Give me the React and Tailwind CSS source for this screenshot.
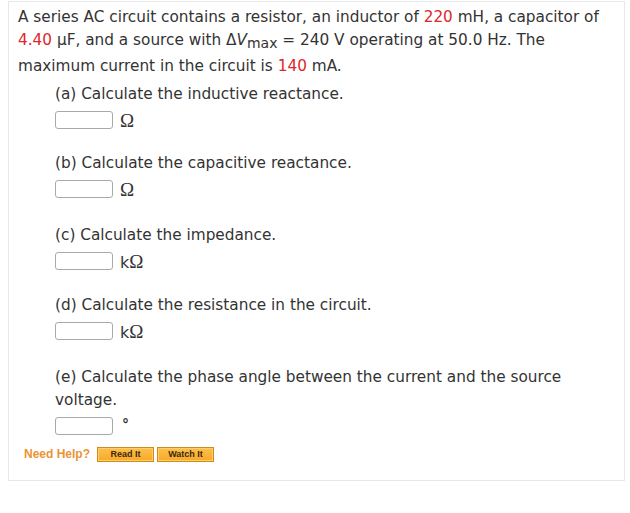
import React from "react";

const Unit = ({ children }) => (
  <span className="ml-[7px] text-[16px] leading-none text-[#333]">{children}</span>
);

const Omega = () => (
  <span className="font-['Liberation_Serif',serif] text-[19px] leading-none">Ω</span>
);

const Part = ({ label, unit, className = "" }) => (
  <div className={className}>
    <p className="leading-[23px]">{label}</p>
    <div className="mt-[5px] flex items-center h-[18px]">
      <input
        type="text"
        className="w-[58px] h-[18px] rounded-[3px] border border-[#a9a9a9] bg-white"
      />
      {unit}
    </div>
  </div>
);

const HelpButton = ({ children }) => (
  <button className="h-[15px] w-[57px] border border-[#d4891c] bg-gradient-to-b from-[#fcc04a] to-[#f7a928] shadow-[inset_0_0_0_1px_#fbcf6e] font-['Liberation_Sans',sans-serif] text-[9px] font-bold leading-none text-[#3a2a10]">
    {children}
  </button>
);

export default function App() {
  return (
    <div className="min-h-[513px] bg-white pl-2 pr-[5px] pt-px font-['DejaVu_Sans',sans-serif] text-[15.3px] text-[#333]">
      <div className="border border-[#e8e8e8] pl-[9px] pr-2 pt-[4px] pb-[17px]">
        <p className="leading-[23px]">
          A series AC circuit contains a resistor, an inductor of{" "}
          <span className="text-[#e0262b]">220</span> mH, a capacitor of{" "}
          <span className="text-[#e0262b]">4.40</span> μF, and a source with Δ
          <span className="italic">V</span>
          <span className="inline-block align-[-3px] pb-[5px] text-[14px] leading-[14px]">max</span> = 240 V
          operating at 50.0 Hz. The maximum current in the circuit is{" "}
          <span className="text-[#e0262b]">140</span> mA.
        </p>

        <div className="pl-[37px] mt-[5px]">
          <Part label="(a) Calculate the inductive reactance." unit={<Unit><Omega /></Unit>} />
          <Part
            className="mt-[23px]"
            label="(b) Calculate the capacitive reactance."
            unit={<Unit><Omega /></Unit>}
          />
          <Part
            className="mt-[26px]"
            label="(c) Calculate the impedance."
            unit={<Unit>k<Omega /></Unit>}
          />
          <Part
            className="mt-[24px]"
            label="(d) Calculate the resistance in the circuit."
            unit={<Unit>k<Omega /></Unit>}
          />
          <Part
            className="mt-[26px]"
            label="(e) Calculate the phase angle between the current and the source voltage."
            unit={<span className="ml-[9px] -mt-[4px] text-[14px] font-bold leading-none">°</span>}
          />
        </div>

        <div className="mt-[10px] flex items-center gap-[3px] pl-[6px]">
          <span className="mr-[4px] font-['Liberation_Sans',sans-serif] text-[12px] font-bold text-[#ea9435]">
            Need Help?
          </span>
          <HelpButton>Read It</HelpButton>
          <HelpButton>Watch It</HelpButton>
        </div>
      </div>
    </div>
  );
}
